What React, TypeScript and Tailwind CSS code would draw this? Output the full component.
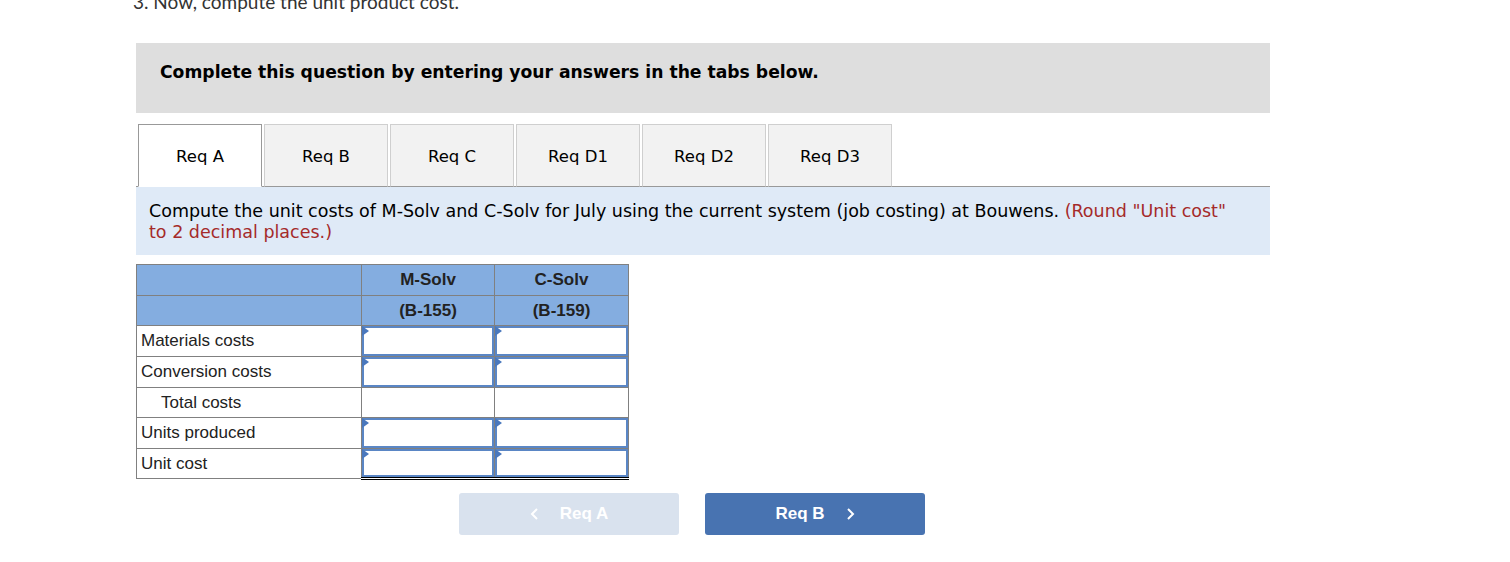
import React from "react";

const tabs = ["Req A", "Req B", "Req C", "Req D1", "Req D2", "Req D3"];

const rows = [
  { label: "Materials costs", input: true, h: "h-[31px]", ih: "h-[30px]" },
  { label: "Conversion costs", input: true, h: "h-[31px]", ih: "h-[30px]" },
  { label: "Total costs", input: false, indent: true, h: "h-[30px]", ih: "h-[29px]" },
  { label: "Units produced", input: true, h: "h-[31px]", ih: "h-[30px]" },
  { label: "Unit cost", input: true, last: true, h: "h-[30px]", ih: "h-[28px]" },
];

function InputCell({ last, ih }: { last?: boolean; ih: string }) {
  return (
    <td className={`w-[133px] border border-[#808080] p-0 align-top ${last ? "border-b-[3px] border-b-black border-double" : ""}`}>
      <div className={`relative w-full border-2 border-[#5a86c5] bg-white ${ih}`}>
        <span className="absolute -left-[2px] -top-[2px] h-0 w-0 border-y-[5px] border-l-[7px] border-y-transparent border-l-[#4a78bd]" />
      </div>
    </td>
  );
}

export default function App() {
  return (
    <div className="min-h-[562px] bg-white pl-[136px] font-['Liberation_Sans',sans-serif]">
      <p className="-ml-[3px] -mt-[12px] mb-[33px] h-[22px] font-['Lato',sans-serif] text-[19px] text-[#333]">
        3. Now, compute the unit product cost.
      </p>

      <div className="w-[1134px]">
        <div className="flex h-[70px] items-start bg-[#dedede] pl-6 pt-[17px]">
          <p className="font-['DejaVu_Sans',sans-serif] text-[17.2px] font-bold text-black">
            Complete this question by entering your answers in the tabs below.
          </p>
        </div>

        <div className="mt-[11px] flex items-end gap-[2px] border-b border-[#999] pl-[2px]">
          {tabs.map((t, i) => (
            <div
              key={t}
              className={`-mb-px flex h-[63px] w-[124px] items-center justify-center border pt-[3px] font-['DejaVu_Sans',sans-serif] text-[16.5px] text-black ${
                i === 0 ? "border-[#999] border-b-white bg-white" : "border-[#cfcfcf] border-b-[#999] bg-[#f2f2f2]"
              }`}
            >
              {t}
            </div>
          ))}
        </div>

        <div className="h-[68px] bg-[#dfeaf7] pl-[13px] pr-9 pt-[14px] font-['DejaVu_Sans',sans-serif] text-[17.5px] leading-[21px] text-black">
          Compute the unit costs of M-Solv and C-Solv for July using the current system (job costing) at Bouwens.{" "}
          <span className="text-[#a52a2a]">(Round "Unit cost" to 2 decimal places.)</span>
        </div>
      </div>

      <table className="mt-[9px] border-collapse text-[17px] text-[#222]">
        <thead>
          <tr className="h-[31px] bg-[#84ade0]">
            <th className="w-[225px] border border-[#808080]" />
            <th className="w-[133px] border border-[#808080] text-center font-bold">M-Solv</th>
            <th className="w-[134px] border border-[#808080] text-center font-bold">C-Solv</th>
          </tr>
          <tr className="h-[30px] bg-[#84ade0]">
            <th className="border border-[#808080]" />
            <th className="border border-[#808080] text-center font-bold">(B-155)</th>
            <th className="border border-[#808080] text-center font-bold">(B-159)</th>
          </tr>
        </thead>
        <tbody>
          {rows.map((r) => (
            <tr key={r.label} className={r.h}>
              <td className={`border border-[#808080] ${r.indent ? "pl-6" : "pl-1"}`}>{r.label}</td>
              {r.input ? (
                <>
                  <InputCell last={r.last} ih={r.ih} />
                  <InputCell last={r.last} ih={r.ih} />
                </>
              ) : (
                <>
                  <td className="border border-[#808080] border-t-black" />
                  <td className="border border-[#808080] border-t-black" />
                </>
              )}
            </tr>
          ))}
        </tbody>
      </table>

      <div className="mt-[13px] flex gap-[26px] pl-[323px]">
        <button className="flex h-[42px] w-[220px] items-center justify-center gap-5 rounded-[3px] bg-[#d9e2ee] text-[17px] font-bold text-white">
          <svg width="10" height="14" viewBox="0 0 10 14" fill="none" stroke="white" strokeWidth="2">
            <path d="M7 2 2 7l5 5" />
          </svg>
          Req A
        </button>
        <button className="flex h-[42px] w-[220px] items-center justify-center gap-5 rounded-[3px] bg-[#4873b1] text-[17px] font-bold text-white">
          Req B
          <svg width="10" height="14" viewBox="0 0 10 14" fill="none" stroke="white" strokeWidth="2">
            <path d="M3 2l5 5-5 5" />
          </svg>
        </button>
      </div>
    </div>
  );
}
